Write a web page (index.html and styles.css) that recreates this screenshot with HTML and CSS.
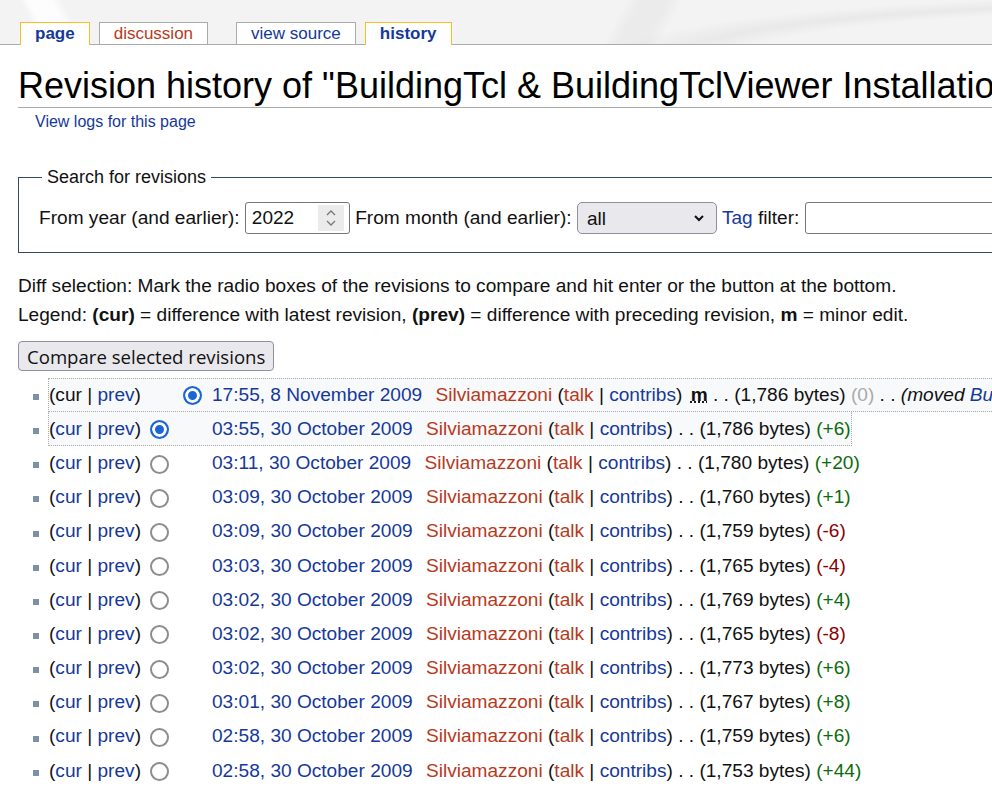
FILE: index.html
```html
<!DOCTYPE html>
<html lang="en">
<head>
<meta charset="utf-8">
<title>Revision history of "BuildingTcl &amp; BuildingTclViewer Installation"</title>
<link rel="stylesheet" href="styles.css">
</head>
<body>
<div class="header">
  <ul class="tabs">
    <li class="tab selected"><a href="#">page</a></li>
    <li class="tab"><a href="#" class="new">discussion</a></li>
    <li class="tab wide"><a href="#">view source</a></li>
    <li class="tab selected"><a href="#">history</a></li>
  </ul>
</div>
<div class="main">
  <h1>Revision history of "BuildingTcl &amp; BuildingTclViewer Installation"</h1>
  <div class="sub"><a href="#">View logs for this page</a></div>

  <fieldset class="search">
    <legend>Search for revisions</legend>
    <div class="frow">From year (and earlier): <span class="num"><input type="text" value="2022" class="field year"><span class="spin"><svg width="12" height="20" viewBox="0 0 12 20"><polyline points="2,7 6,3 10,7" fill="none" stroke="#777" stroke-width="1.3"/><polyline points="2,13 6,17 10,13" fill="none" stroke="#777" stroke-width="1.3"/></svg></span></span> From month (and earlier): <span class="sel"><select class="month"><option>all</option></select><svg class="chev" width="10" height="7" viewBox="0 0 10 7"><polyline points="1,1 5,5 9,1" fill="none" stroke="#111" stroke-width="2"/></svg></span> <a href="#">Tag</a> filter: <input type="text" class="field tag"></div>
  </fieldset>

  <div class="para first">Diff selection: Mark the radio boxes of the revisions to compare and hit enter or the button at the bottom.</div>
  <div class="para">Legend: <b>(cur)</b> = difference with latest revision, <b>(prev)</b> = difference with preceding revision, <b>m</b> = minor edit.</div>

  <button class="cmp" type="button">Compare selected revisions</button>

  <ul class="hist">
    <li class="sel"><span>(cur | <a href="#">prev</a>)</span><input type="radio" name="oldid" class="r r1 hid"><input type="radio" name="diff" class="r r2" checked><a href="#" class="date">17:55, 8 November 2009</a> <span class="user"><a href="#" class="new">Silviamazzoni</a> (<a href="#" class="new">talk</a> | <a href="#">contribs</a>)</span> <abbr class="minor" title="minor edit">m</abbr> . . (1,786 bytes) <span class="zero">(0)</span> . . <span class="comment">(moved <a href="#">BuildingTcl &amp; BuildingTclViewer Installation</a> to <a href="#">BuildingTcl &amp; BuildingTclViewer Installation Guide</a>)</span></li>
    <li class="sel next"><span>(<a href="#">cur</a> | <a href="#">prev</a>)</span><input type="radio" name="oldid" class="r r1" checked><input type="radio" name="diff" class="r r2 hid"><a href="#" class="date">03:55, 30 October 2009</a> <span class="user"><a href="#" class="new">Silviamazzoni</a> (<a href="#" class="new">talk</a> | <a href="#">contribs</a>)</span> . . (1,786 bytes) <span class="pos">(+6)</span></li>
    <li><span>(<a href="#">cur</a> | <a href="#">prev</a>)</span><input type="radio" name="oldid" class="r r1"><input type="radio" name="diff" class="r r2 hid"><a href="#" class="date">03:11, 30 October 2009</a> <span class="user"><a href="#" class="new">Silviamazzoni</a> (<a href="#" class="new">talk</a> | <a href="#">contribs</a>)</span> . . (1,780 bytes) <span class="pos">(+20)</span></li>
    <li><span>(<a href="#">cur</a> | <a href="#">prev</a>)</span><input type="radio" name="oldid" class="r r1"><input type="radio" name="diff" class="r r2 hid"><a href="#" class="date">03:09, 30 October 2009</a> <span class="user"><a href="#" class="new">Silviamazzoni</a> (<a href="#" class="new">talk</a> | <a href="#">contribs</a>)</span> . . (1,760 bytes) <span class="pos">(+1)</span></li>
    <li><span>(<a href="#">cur</a> | <a href="#">prev</a>)</span><input type="radio" name="oldid" class="r r1"><input type="radio" name="diff" class="r r2 hid"><a href="#" class="date">03:09, 30 October 2009</a> <span class="user"><a href="#" class="new">Silviamazzoni</a> (<a href="#" class="new">talk</a> | <a href="#">contribs</a>)</span> . . (1,759 bytes) <span class="neg">(-6)</span></li>
    <li><span>(<a href="#">cur</a> | <a href="#">prev</a>)</span><input type="radio" name="oldid" class="r r1"><input type="radio" name="diff" class="r r2 hid"><a href="#" class="date">03:03, 30 October 2009</a> <span class="user"><a href="#" class="new">Silviamazzoni</a> (<a href="#" class="new">talk</a> | <a href="#">contribs</a>)</span> . . (1,765 bytes) <span class="neg">(-4)</span></li>
    <li><span>(<a href="#">cur</a> | <a href="#">prev</a>)</span><input type="radio" name="oldid" class="r r1"><input type="radio" name="diff" class="r r2 hid"><a href="#" class="date">03:02, 30 October 2009</a> <span class="user"><a href="#" class="new">Silviamazzoni</a> (<a href="#" class="new">talk</a> | <a href="#">contribs</a>)</span> . . (1,769 bytes) <span class="pos">(+4)</span></li>
    <li><span>(<a href="#">cur</a> | <a href="#">prev</a>)</span><input type="radio" name="oldid" class="r r1"><input type="radio" name="diff" class="r r2 hid"><a href="#" class="date">03:02, 30 October 2009</a> <span class="user"><a href="#" class="new">Silviamazzoni</a> (<a href="#" class="new">talk</a> | <a href="#">contribs</a>)</span> . . (1,765 bytes) <span class="neg">(-8)</span></li>
    <li><span>(<a href="#">cur</a> | <a href="#">prev</a>)</span><input type="radio" name="oldid" class="r r1"><input type="radio" name="diff" class="r r2 hid"><a href="#" class="date">03:02, 30 October 2009</a> <span class="user"><a href="#" class="new">Silviamazzoni</a> (<a href="#" class="new">talk</a> | <a href="#">contribs</a>)</span> . . (1,773 bytes) <span class="pos">(+6)</span></li>
    <li><span>(<a href="#">cur</a> | <a href="#">prev</a>)</span><input type="radio" name="oldid" class="r r1"><input type="radio" name="diff" class="r r2 hid"><a href="#" class="date">03:01, 30 October 2009</a> <span class="user"><a href="#" class="new">Silviamazzoni</a> (<a href="#" class="new">talk</a> | <a href="#">contribs</a>)</span> . . (1,767 bytes) <span class="pos">(+8)</span></li>
    <li><span>(<a href="#">cur</a> | <a href="#">prev</a>)</span><input type="radio" name="oldid" class="r r1"><input type="radio" name="diff" class="r r2 hid"><a href="#" class="date">02:58, 30 October 2009</a> <span class="user"><a href="#" class="new">Silviamazzoni</a> (<a href="#" class="new">talk</a> | <a href="#">contribs</a>)</span> . . (1,759 bytes) <span class="pos">(+6)</span></li>
    <li><span>(<a href="#">cur</a> | <a href="#">prev</a>)</span><input type="radio" name="oldid" class="r r1"><input type="radio" name="diff" class="r r2 hid"><a href="#" class="date">02:58, 30 October 2009</a> <span class="user"><a href="#" class="new">Silviamazzoni</a> (<a href="#" class="new">talk</a> | <a href="#">contribs</a>)</span> . . (1,753 bytes) <span class="pos">(+44)</span></li>
  </ul>
</div>
</body>
</html>
```
FILE: styles.css
```css
html {
  overflow: hidden;
}
body {
  margin: 0;
  width: 1400px;
  font-family: "Liberation Sans", Arial, sans-serif;
  font-size: 19.1px;
  color: #111;
  background: #fff;
}
a {
  color: #15399a;
  text-decoration: none;
}
a.new {
  color: #b83a1c;
}

/* header with tabs */
.header {
  height: 44px;
  border-bottom: 1px solid #aaa;
  display: flex;
  align-items: flex-end;
  padding-left: 20px;
  background:
    radial-gradient(ellipse 620px 70px at 1180px 62px, rgba(0,0,0,0) 72%, rgba(0,0,0,0.045) 82%, rgba(0,0,0,0) 94%),
    linear-gradient(62deg, rgba(255,255,255,0) 0 3%, rgba(255,255,255,0.8) 3.6% 5.2%, rgba(255,255,255,0) 6%),
    linear-gradient(118deg, rgba(0,0,0,0) 0 44%, rgba(0,0,0,0.03) 45% 47%, rgba(0,0,0,0) 48%),
    #f3f3f3;
}
.tabs {
  display: flex;
  align-items: flex-end;
  list-style: none;
  margin: 0;
  padding: 0;
}
.tab {
  height: 21px;
  line-height: 21px;
  padding: 0 14px;
  font-size: 17px;
  border: 1px solid #aaa;
  border-bottom: none;
  background: #fff;
  margin-right: 9px;
}
.tab.wide {
  margin-left: 19px;
}
.tab.selected {
  border-color: #fabd23;
  height: 22px;
  margin-bottom: -1px;
  font-weight: bold;
}

/* main content */
.main {
  padding: 20px 0 0 18px;
}
h1 {
  margin: 0;
  font-size: 36px;
  font-weight: normal;
  line-height: 42px;
  border-bottom: 1px solid #aaa;
  white-space: nowrap;
  color: #000;
}
.sub {
  font-size: 16px;
  line-height: 24px;
  margin: 2px 0 0 17px;
}

.search {
  margin: 32px 0 0;
  padding: 14px 19px 18px 20px;
  border: 1px solid #2f4d60;
  min-width: 0;
}
.search legend {
  font-size: 18px;
  line-height: 22px;
  padding: 0 5px;
  margin-left: 3px;
}
.frow {
  height: 32px;
  line-height: 32px;
  white-space: nowrap;
}
.field {
  box-sizing: border-box;
  height: 32px;
  border: 1px solid #767676;
  border-radius: 3px;
  background: #fff;
  font: 19px "Liberation Sans", Arial, sans-serif;
  color: #111;
  vertical-align: top;
  margin: 0;
}
.num {
  display: inline-block;
  position: relative;
  vertical-align: top;
}
.year {
  width: 105px;
  padding: 0 0 0 6px;
}
.spin {
  position: absolute;
  right: 6px;
  top: 3px;
  width: 26px;
  height: 26px;
  background: #ebebeb;
  display: flex;
  align-items: center;
  justify-content: center;
}
.sel {
  display: inline-block;
  position: relative;
  vertical-align: top;
}
.month {
  appearance: none;
  -webkit-appearance: none;
  box-sizing: border-box;
  width: 140px;
  height: 32px;
  margin: 0;
  padding: 0 0 0 9px;
  border: 1px solid #8f8f9d;
  border-radius: 5px;
  background: #e9e9ed;
  font: 19px "Liberation Sans", Arial, sans-serif;
  color: #111;
  vertical-align: top;
}
.chev {
  position: absolute;
  right: 13px;
  top: 13px;
}
.tag {
  width: 320px;
  padding: 0 6px;
}

.para {
  line-height: 28.5px;
}
.para.first {
  margin-top: 19px;
}

.cmp {
  display: block;
  margin: 12px 0 0;
  height: 30px;
  padding: 0 8px;
  border: 1px solid #8f8f9d;
  border-radius: 4px;
  background: #e9e9ed;
  font-family: "Open Sans", "Noto Sans", sans-serif;
  font-size: 18.6px;
  color: #111;
}

/* history list */
.hist {
  list-style: none;
  margin: 7px 0 0;
  padding: 0 0 0 30px;
}
.hist li {
  position: relative;
  border: 1px solid transparent;
  padding: 1.84px 0;
  line-height: 28.5px;
  white-space: nowrap;
}
.hist li::before {
  content: "";
  position: absolute;
  left: -16px;
  top: 15px;
  width: 6px;
  height: 6px;
  background: #7b91a8;
}
.hist li.sel {
  border-style: dotted;
  border-color: #aaa;
  background: #f8f9fa;
}
.hist li.sel.next {
  border-top-color: transparent;
}
.r {
  appearance: none;
  -webkit-appearance: none;
  box-sizing: border-box;
  width: 19px;
  height: 19px;
  margin: 0;
  border: 2px solid #8d8d8d;
  border-radius: 50%;
  background: #fff;
  vertical-align: middle;
}
.r:checked {
  border: 2.5px solid #1b66d2;
  background: #1b66d2;
  box-shadow: inset 0 0 0 3px #fff;
}
.r1 {
  margin-left: 9px;
  margin-right: 14px;
}
.r2 {
  margin-right: 10px;
}
.hid {
  visibility: hidden;
}
.user {
  margin-left: 8px;
}
.minor {
  font-weight: bold;
  text-decoration: underline dotted;
  border: none;
  margin-left: 3px;
}
.pos {
  color: #0c6b0c;
}
.neg {
  color: #8b0000;
}
.zero {
  color: #aaa;
}
.comment {
  font-style: italic;
}
```
